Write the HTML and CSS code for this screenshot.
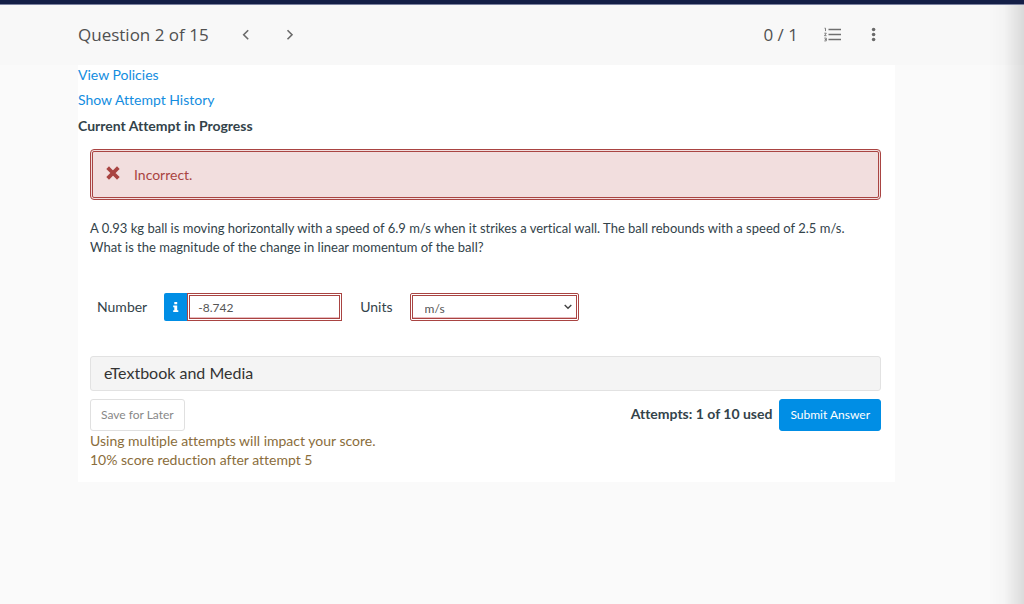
FILE: index.html
```html
<!DOCTYPE html>
<html lang="en">
<head>
<meta charset="utf-8">
<meta name="viewport" content="width=device-width, initial-scale=1">
<title>Question 2 of 15</title>
<link rel="stylesheet" href="styles.css">
</head>
<body>
<header class="topbar">
  <div class="topbar-inner">
    <h1 class="title">Question 2 of 15</h1>
    <nav class="pager">
      <button class="icon-btn" type="button" aria-label="Previous question"><svg width="24" height="24" viewBox="0 0 24 24"><path d="M14.200 7.200 9.700 11.700l4.500 4.500" fill="none" stroke="#6a6a6a" stroke-width="1.600"/></svg></button>
      <button class="icon-btn" type="button" aria-label="Next question"><svg width="24" height="24" viewBox="0 0 24 24"><path d="M9.500 7.200 14 11.700l-4.500 4.500" fill="none" stroke="#6a6a6a" stroke-width="1.600"/></svg></button>
    </nav>
    <div class="tools">
      <span class="score">0 / 1</span>
      <button class="icon-btn" type="button" aria-label="Question list"><svg width="24" height="24" viewBox="0 0 24 24"><path d="M7.500 6.500h12.500M7.500 11.500h12.500M7.500 16.500h12.500" stroke="#6f6f6f" stroke-width="1.400"/><path d="M3.500 5.200h1v2.900M3.300 10.200h2L3.500 12.700h2M3.300 15.100h2v2.800h-2M3.900 16.500h1.300" fill="none" stroke="#707070" stroke-width=".9"/></svg></button>
      <button class="icon-btn" type="button" aria-label="More options"><svg width="24" height="24" viewBox="0 0 24 24" fill="#6a6a6a"><circle cx="11.600" cy="6.500" r="1.800"/><circle cx="11.600" cy="11.500" r="1.800"/><circle cx="11.600" cy="16.500" r="1.800"/></svg></button>
    </div>
  </div>
</header>
<main class="card">
  <a class="link" href="#policies">View Policies</a>
  <a class="link" href="#history">Show Attempt History</a>
  <h2 class="status">Current Attempt in Progress</h2>
  <div class="body">
    <div class="alert" role="alert">
      <svg class="cross" width="14" height="14" viewBox="0 0 14 14"><path d="M3 3l8 8M11 3l-8 8" stroke="#a94442" stroke-width="3.800" stroke-linecap="square"/></svg>
      <span>Incorrect.</span>
    </div>
    <p class="question">A 0.93 kg ball is moving horizontally with a speed of 6.9 m/s when it strikes a vertical wall. The ball rebounds with a speed of 2.5 m/s.<br>What is the magnitude of the change in linear momentum of the ball?</p>
    <form class="answer">
      <label class="number-label" for="number">Number</label>
      <div class="number-group">
        <button class="info" type="button" aria-label="Number format help"><svg width="8" height="12" viewBox="0 0 8 12" fill="#fff"><path d="M2.300 1h2.900v2.200H2.300zM1.200 4.500h4v4.800h1.100V11H1.200V9.300h1.100V6.200H1.200z"/></svg></button>
        <input class="field number" id="number" type="text" value="-8.742">
      </div>
      <label class="units-label" for="units">Units</label>
      <div class="select-wrap">
        <select class="field units" id="units"><option>m/s</option></select>
        <svg class="chevron" width="8" height="6" viewBox="0 0 8 6"><path d="M.7 1 4 4.300 7.300 1" fill="none" stroke="#444" stroke-width="1.400"/></svg>
      </div>
    </form>
    <button class="media" type="button">eTextbook and Media</button>
    <div class="actions">
      <button class="btn save" type="button">Save for Later</button>
      <span class="attempts">Attempts: 1 of 10 used</span>
      <button class="btn submit" type="button">Submit Answer</button>
    </div>
    <p class="warning">Using multiple attempts will impact your score.<br>10% score reduction after attempt 5</p>
  </div>
</main>
<div class="edge"></div>
</body>
</html>
```
FILE: styles.css
```css
* { box-sizing: border-box; }
html { background: #fafafa; }
body {
  margin: 0;
  color: #33434a;
  font-family: Lato, sans-serif;
  font-size: 14px;
  font-variant-ligatures: none;
  line-height: 19px;
}
button { margin: 0; font-family: inherit; cursor: pointer; }
svg { display: block; }

.topbar {
  border-top: 4px solid #141f47;
  background: #f8f8f8;
  box-shadow: inset 0 1px #7b82a0;
}
.topbar-inner {
  display: flex;
  align-items: center;
  height: 61px;
  margin: 0 138px 0 78px;
  color: #505050;
  font-family: "Open Sans", sans-serif;
  font-size: 17px;
}
.title { margin: 0; font-size: inherit; font-weight: 400; }
.pager { display: flex; gap: 20px; margin-left: 25px; }
.tools { display: flex; align-items: center; gap: 17px; margin-left: auto; }
.score { margin-right: 6px; }
.icon-btn { padding: 0; border: 0; background: none; }

.card {
  display: flex;
  flex-direction: column;
  align-items: flex-start;
  margin: 0 129px 0 78px;
  padding-bottom: 13px;
  background: #fff;
}
.link { margin-bottom: 6px; color: #138de0; text-decoration: none; }
.status { margin: 1px 0 14px; font-size: 14px; font-weight: 700; }
.body { align-self: stretch; padding: 0 14px 0 12px; }

.alert {
  display: flex;
  align-items: center;
  gap: 14px;
  height: 51px;
  padding: 0 13px;
  border: 3px double #a94442;
  border-radius: 4px;
  background: #f2dede;
  color: #a94442;
}
.cross { margin-bottom: 4px; }
.question { margin: 19px 0 36px; font-size: 13px; }

.answer { display: flex; align-items: center; margin: 0; padding-left: 7px; }
.number-label, .units-label { padding-bottom: 1px; }
.number-group { display: flex; width: 178px; margin-left: 17px; }
.info {
  display: flex;
  align-items: center;
  justify-content: center;
  width: 23px;
  padding: 0;
  border: 0;
  border-radius: 2px 0 0 2px;
  background: #008ee5;
}
.field {
  width: 100%;
  height: 28px;
  border: 3px double #a94442;
  background: #fff;
  box-shadow: inset 0 -1px #e9bcc0;
  color: #555;
  font-family: inherit;
  font-size: 12px;
}
.number { flex: 1; min-width: 0; padding: 0 8px; }
.units-label { margin-left: 18px; }
.select-wrap { position: relative; width: 169px; margin-left: 17px; }
.units { appearance: none; display: block; padding: 3px 12px 0; border-radius: 2px; }
.chevron { position: absolute; top: 11px; right: 7px; pointer-events: none; }

.media {
  display: block;
  width: 100%;
  height: 35px;
  margin-top: 35px;
  padding: 0 13px 2px;
  border: 1px solid #e2e2e2;
  border-radius: 3px;
  background: #f4f4f4;
  color: #333;
  font-size: 16px;
  text-align: left;
}
.actions { display: flex; align-items: center; margin-top: 8px; }
.btn { height: 32px; padding: 0 10px 2px; border: 1px solid; border-radius: 3px; font-size: 12px; }
.save { border-color: #e0e0e0; background: #fff; color: #888; }
.attempts { margin: 0 7px 4px auto; font-weight: 700; }
.submit { border-color: #008ee5; background: #008ee5; color: #fff; }
.warning { margin: 0; color: #8a6d3b; }

.edge {
  position: fixed;
  top: 5px;
  right: 0;
  bottom: 0;
  width: 36px;
  background: linear-gradient(to right, transparent, rgba(0, 0, 0, .02) 45%, rgba(0, 0, 0, .12));
  pointer-events: none;
}
```
